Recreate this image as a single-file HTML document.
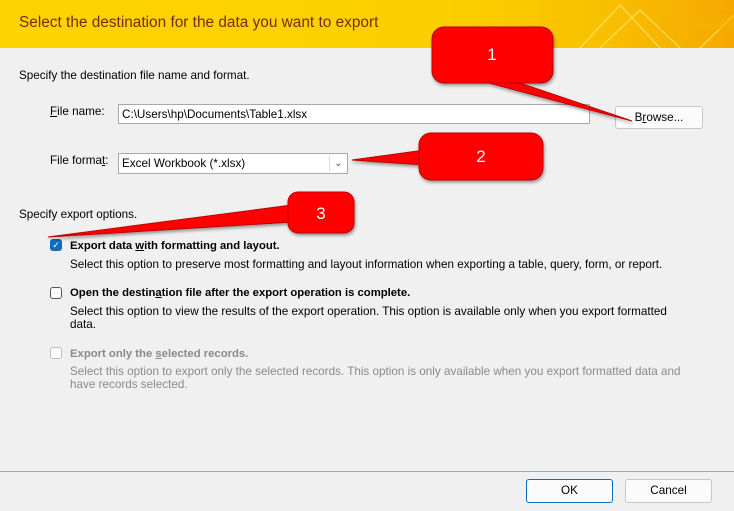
<!DOCTYPE html>
<html><head><style>
body{margin:0;width:734px;height:511px;overflow:hidden;background:#f0f0f0;font-family:"Liberation Sans",sans-serif;font-size:11.7px;color:#000;position:relative}
.hdr{position:absolute;left:0;top:0;width:734px;height:48px;background:linear-gradient(90deg,#fdd400 0%,#fcd000 60%,#f9c200 80%,#f5a800 100%)}
.hdr span{position:absolute;left:19px;top:14px;font-size:15.4px;color:#7a2a00}
.t{position:absolute;white-space:nowrap}
.inp{position:absolute;background:#fff;border:1px solid #a8a8a8;box-sizing:border-box;padding-left:3px;line-height:19px}
.btn{position:absolute;background:#fbfbfb;border:1px solid #c8c8c8;border-radius:3px;box-sizing:border-box;text-align:center}
.cb{position:absolute;width:12px;height:12px;border:1px solid #555;border-radius:3px;background:#fff;box-sizing:border-box}
b{font-weight:bold;font-size:11.3px}
.g{color:#8a8a8a}
</style></head><body>
<div class="hdr"><span>Select the destination for the data you want to export</span>
<svg width="734" height="48" style="position:absolute;left:0;top:0" fill="none" stroke="#ffe766" stroke-width="1.5" opacity=".7">
<path d="M580 48 L620 5 L660 48 M600 48 L640 10 L680 48 M700 48 L734 15"/>
<path d="M660 15 L734 15 L734 30 L660 30 Z" fill="#f7b400" stroke="none" opacity=".6"/>
</svg></div>
<div class="t" style="left:19px;top:69px">Specify the destination file name and format.</div>
<div class="t" style="left:50px;top:105px"><u>F</u>ile name:</div>
<div class="inp" style="left:118px;top:104px;width:472px;height:20px">C:\Users\hp\Documents\Table1.xlsx</div>
<div class="btn" style="left:615px;top:106px;width:88px;height:23px;line-height:21px">B<u>r</u>owse...</div>
<div class="t" style="left:50px;top:154px">File forma<u>t</u>:</div>
<div class="inp" style="left:118px;top:153px;width:230px;height:21px">Excel Workbook (*.xlsx)</div>
<div style="position:absolute;left:329px;top:155px;width:17px;height:17px;border-left:1px solid #ddd;text-align:center;font-size:10px;line-height:17px;color:#555">&#8964;</div>
<div class="t" style="left:19px;top:208px">Specify export options.</div>
<div class="cb" style="left:50px;top:239px;background:#0f6cbd;border-color:#0f6cbd;color:#fff;font-size:9px;line-height:10px;text-align:center">✓</div>
<div class="t" style="left:70px;top:239px"><b>Export data <u>w</u>ith formatting and layout.</b></div>
<div class="t" style="left:70px;top:258px">Select this option to preserve most formatting and layout information when exporting a table, query, form, or report.</div>
<div class="cb" style="left:50px;top:287px"></div>
<div class="t" style="left:70px;top:286px"><b>Open the destin<u>a</u>tion file after the export operation is complete.</b></div>
<div class="t" style="left:70px;top:305px">Select this option to view the results of the export operation. This option is available only when you export formatted</div>
<div class="t" style="left:70px;top:318px">data.</div>
<div class="cb" style="left:50px;top:347px;border-color:#bbb"></div>
<div class="t g" style="left:70px;top:347px"><b>Export only the <u>s</u>elected records.</b></div>
<div class="t g" style="left:70px;top:365px">Select this option to export only the selected records. This option is only available when you export formatted data and</div>
<div class="t g" style="left:70px;top:378px">have records selected.</div>
<div style="position:absolute;left:0;top:471px;width:734px;height:1px;background:#a8a8a8"></div>
<div class="btn" style="left:526px;top:479px;width:87px;height:24px;line-height:22px;border-color:#0f6cbd">OK</div>
<div class="btn" style="left:625px;top:479px;width:87px;height:24px;line-height:22px">Cancel</div>
<svg width="734" height="511" style="position:absolute;left:0;top:0">
<defs><filter id="s"><feDropShadow dx="1" dy="2" stdDeviation="1.5" flood-opacity=".4"/></filter></defs>
<g fill="#ff0000" stroke="#b00" stroke-width="1" filter="url(#s)">
<path d="M470 78 L632 121 L505 78 Z"/>
<rect x="432" y="27" width="121" height="56" rx="12"/>
<path d="M425 150 L352 160 L425 165 Z"/>
<rect x="419" y="133" width="124" height="47" rx="12"/>
<path d="M292 205 L48 237 L292 222 Z"/>
<rect x="288" y="192" width="66" height="41" rx="10"/>
</g>
<g fill="#fff" font-family="Liberation Sans, sans-serif" font-size="17" text-anchor="middle">
<text x="492" y="60">1</text><text x="481" y="162">2</text><text x="321" y="219">3</text></g>
</svg>
</body></html>
